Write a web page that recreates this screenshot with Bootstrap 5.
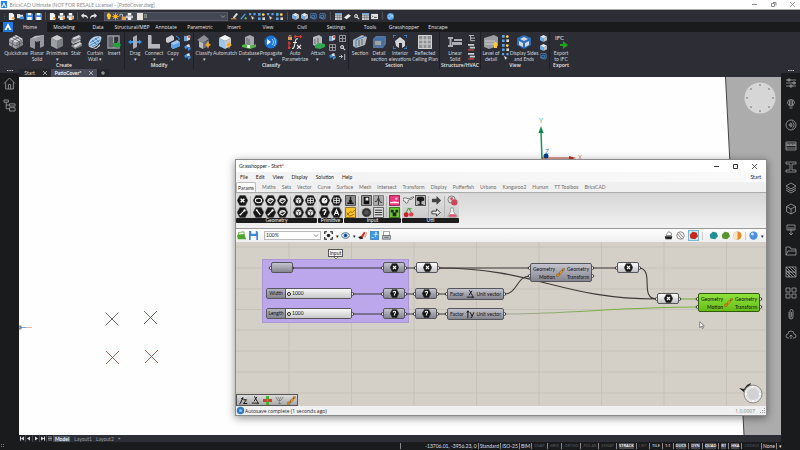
<!DOCTYPE html>
<html lang="en">
<head>
<meta charset="utf-8">
<meta name="viewport" content="width=device-width, initial-scale=1">
<title>BricsCAD Ultimate - PatioCover.dwg</title>
<link href="https://cdn.jsdelivr.net/npm/bootstrap@5.3.0/dist/css/bootstrap.min.css" rel="stylesheet">
<style>
:root{--bar:#2d2e35;--deep:#1a1b1d;--pale:#d3d5d9}
body{font-family:"Open Sans","Noto Sans",sans-serif;font-size:5px;line-height:6px;background:var(--deep);color:var(--pale)}
button,select,a.lk{font:inherit;color:inherit;background:none;border:0;padding:0;text-decoration:none;white-space:nowrap}
svg{display:block;flex:none;overflow:visible}
.i7{width:7px;height:7px}.i9{width:9px;height:9px}.i11{width:11px;height:11px}.i14{width:14px;height:14px}
.titlebar{height:10px;background:#fff;color:#8c8c8c;border-bottom:1px solid #aaa;font-family:Lato,sans-serif}
.winbtns{gap:12px;padding-right:4px}
.titlebar .winbtns{padding-right:4px}
.quick{height:12px;background:var(--bar)}
.qs{gap:2px}
.qs .vr1{margin:0 1px}
.qs.wide{margin-left:3px}
.qs.wide .vr1{margin:0 2px}
.vr1{width:1px;height:8px;background:#50525a;flex:none}
.grip{width:8px}
.layerbox{width:124px;height:9px;margin-left:7px;background:#434854;border:1px solid #555a66}
.layerbox select{appearance:none;color:#e8e8e8;line-height:6px}
.tabs{height:10px;background:var(--deep)}
.logo{width:10px;height:10px;background:#1f78e6;margin-left:3px}
.tabs a{width:34px;height:10px;color:#e6e6e6}
.tabs a.on{background:var(--bar)}
.ribbon{height:37px;background:var(--bar)}
.grp{border-right:1px solid #1f2024;padding:3px 1px 0}
.grp:last-child{border:0}
.rb{font-family:Lato,sans-serif!important;font-size:5px;line-height:6px;height:27px;color:#d0d2d6}
.rb svg{margin-bottom:1px}
.w18{width:18px}.w20{width:20px}.w22{width:22px}.w24{width:24px}.w26{width:26px}.w28{width:28px}
.smc{width:10px;gap:2px}
.gl{font-size:5px;line-height:6px;font-weight:600;color:#e4e5e8}
.dtabs{height:8px;background:var(--bar);font-family:Lato,sans-serif}
.dtabs .dt{height:8px;padding:0 4px;background:#26272c}
.dtabs .on{background:#4b4d5c;color:#fff;font-weight:600}
.side{width:19px;flex:none;background:var(--deep);color:#9a9a9a}
.side .hnd{height:4px;width:19px;background:var(--bar)}
.rail{gap:11px;padding-top:5px}
#rr svg{width:10px;height:10px;fill:none;stroke:#a0a0a0;stroke-width:.8}
.stage{background:#fefefe;min-height:0}
.mtabs{height:7px;background:var(--bar);color:#9a9ca2;font-family:Lato,sans-serif}
.mtabs .nb{width:7px;height:7px;background:#202126;border-right:1px solid #44464e}
.mtabs .on{background:#4d535f;color:#fff;font-weight:600;padding:0 1px}
.status{height:8px;background:var(--deep);font-family:Lato,sans-serif;color:#dcdee2}
.status .c{padding:0 1px;border-left:1px solid #8a8a8a;line-height:6px}
.status .t{padding:0 2px;font-family:"Open Sans",sans-serif;font-size:4px;font-weight:600}
.status .off{color:#505257}
.status .lit{background:#464a52;background-clip:content-box;color:#fff}
.status .coords{width:78px}
.status .more{width:24px;padding-left:2px}
/* floating window */
.gh{left:216px;top:82px;width:532px;height:257px;background:#f4f4f4;color:#222;border:1px solid #8b8b8b;box-shadow:0 2px 8px rgba(0,0,0,.45);font-family:Lato,sans-serif}
.gh .tt{height:12px;background:#fff;padding:0 4px 0 3px}
.gh .mn{height:10px;padding:0 5px 0 4px;background:linear-gradient(90deg,#f2f2f2,#fafafa);gap:8px}
.gh .tb{height:10px;background:#f0f0f0;color:#6c6c6c;gap:6px}
.gh .tb .on{background:#fff;color:#222;border:1px solid #bbb;border-bottom:0;border-radius:2px 2px 0 0;width:20px;height:10px}
.gh .rbn{height:37px;background:linear-gradient(#d6d6d6,#f1f1f1);border-top:1px solid #aaa;border-bottom:1px solid #999;padding:1px 0;gap:1px}
.pn{background:linear-gradient(#e2e2e2,#c6c6c6);border-radius:2px;height:29px}
.pn .ic{height:24px;padding:0 1px}
.pn .cell{display:grid;grid-template-columns:repeat(2,11px);gap:1px}
.pn .cell.one{grid-template-columns:11px}.pn .cell.three{grid-template-columns:repeat(3,11px)}
.pn .cp{height:5px;background:#1c1c1c;color:#eee;line-height:5px;border-radius:1px}
#p1{width:81px}#p2{width:25px}#p3{width:57px}#p4{width:57px}
.ln{width:1px;height:21px;background:#b4b4b4}
.gh .tools{height:13px;background:linear-gradient(#fdfdfd,#efefef);padding:0 3px 0 1px}
.g3{gap:3px}
.dd{width:2px;overflow:visible}
.zoombox{width:57px;margin-left:3px}
.zoomsel{width:57px;height:9px;border:1px solid #bbb!important;background:#fff!important;appearance:none;padding-left:1px!important;line-height:7px}
.zoombox svg{position:absolute;right:1px;top:1px}
.board{background:#d5d0c7;overflow:hidden}
.gh .st{height:9px;background:#f0f0f0;font-family:"Open Sans",sans-serif}
.ver{color:#888}
.picked{border:1px solid #7ab8d8!important;background:#cfe8f5!important}
.nd{position:absolute;height:11px;border:1px solid #55555c;border-radius:2px;background:linear-gradient(#c4c4cf,#85858f);color:#101014;line-height:6px}
.nd.lt{background:linear-gradient(#fff,#c2c2c2)}
.nd.sm{width:22px}
.nd.gn{background:linear-gradient(#8fe23c,#68bd18);border-color:#2f5a0a}
.nd.big{width:62px;height:19px;padding:0 2px}
.nd.big span{line-height:8px}
.nd.fac{width:57px;height:12px;padding:0 2px}
.zone{position:absolute;left:26px;top:17px;width:147px;height:64px;background:#bda7ec;border:1px solid #aa98d2}
.tag{position:absolute;left:92px;top:7px;width:15px;height:8px;background:#f6f6f6;border:1px solid #555;line-height:6px;color:#222;text-align:center}
.sl{width:86px;background:#eee}
.sl label{width:19px;height:9px;line-height:8px;background:linear-gradient(#b4b4c0,#85858f);border-right:1px solid #555}
.sl .trk{background:linear-gradient(#f8f8f8,#c8c8c8);height:9px}
.sl input{position:absolute;inset:0;width:100%;height:9px;appearance:none;background:none;margin:0}
.sl input::-webkit-slider-thumb{appearance:none;width:4px;height:4px;border:1px solid #222;border-radius:2px;background:#fff;margin-left:1px}
.sl output{position:relative;padding-left:6px;line-height:8px;display:block}
#a1{left:35px;top:20px}#a2{left:147px;top:20px}#a3{left:180px;top:20px}#a4{left:294px;top:21px}#a5{left:381px;top:20px}#a6{left:421px;top:51px}#a7{left:462px;top:51px}
#b1{left:30px;top:46px}#b2{left:147px;top:46px}#b3{left:179px;top:46px}#b4{left:211px;top:46px}
#c1{left:30px;top:66px}#c2{left:147px;top:66px}#c3{left:179px;top:66px}#c4{left:211px;top:66px}
.shelf{position:absolute;left:0;bottom:0;width:62px;height:12px;background:linear-gradient(#dcdcdc,#a8a8a8);border:1px solid #555}
.over{position:absolute;inset:0}
.dial{position:absolute;right:1px;bottom:1px;width:26px;height:24px}
</style>
<script src="https://cdn.jsdelivr.net/npm/bootstrap@5.3.0/dist/js/bootstrap.bundle.min.js"></script>
</head>
<body class="vh-100 d-flex flex-column overflow-hidden">

<svg width="0" height="0" class="position-absolute" aria-hidden="true">
<defs>
<symbol id="cube" viewBox="0 0 14 14"><path fill="#c9cbce" d="M7 0l6 3-6 3-6-3z"/><path fill="#9c9fa3" d="M1 3l6 3v8l-6-3z"/><path fill="#7c7f84" d="M13 3l-6 3v8l6-3z"/></symbol>
<symbol id="qdraw" viewBox="0 0 14 14"><path fill="#d7d9dc" d="M7 0l7 4-7 4-7-4z"/><path fill="#a2a5a9" d="M0 4l7 4v6l-7-4z"/><path fill="#85888c" d="M14 4l-7 4v6l7-4z"/><path stroke="#55585d" fill="none" stroke-width=".8" d="M3 2.500l7 4M5 1l7 4M10 2L3 6M0 7l7 4 7-4M3.500 6v6M10.500 6v6"/></symbol>
<symbol id="planar" viewBox="0 0 14 14"><path fill="#c2c4c8" d="M0 4l5-3 9-1v3L9 4l-4 2z"/><path fill="#95989d" d="M0 4l5-1v11l-5-2zM5 3l9-3v11l-4 2V6L6 7z"/></symbol>
<symbol id="stair" viewBox="0 0 14 14"><path fill="#cfd1d4" d="M3 3l7-3 2 2-7 3zM2 7l8-3 2 2-8 3zM3 11l8-4 2 2-7 4z"/><path fill="#84878c" d="M3 3l2 2v3l-3-1zM4 9l2 4v1l-4-3zM12 2v2l-7 4V5zM13 9v2l-7 3v-1z"/></symbol>
<symbol id="curtain" viewBox="0 0 14 14"><path fill="#a9cdf0" stroke="#dfe9f4" stroke-width=".7" d="M1 11C0 5 6 0 13 2c0 5-4 10-9 10z"/><path stroke="#3f78b4" fill="none" stroke-width=".8" d="M2 8l9-6M1 11l11-6M4 12l7-4M4 5l5 5M7 3l4 4"/><path fill="#c9cbce" d="M1 11l7 2 4-4v2l-4 3-7-2z"/></symbol>
<symbol id="insert" viewBox="0 0 14 14"><path fill="none" stroke="#9ba0a5" stroke-width="1.400" d="M1 1h11v12H1zM6.500 1v12"/><path fill="#60656c" d="M2 2h4v10H2z"/><path fill="#22a33a" d="M6 8h4V6l4 4-4 4v-2H6z"/></symbol>
<symbol id="drag" viewBox="0 0 14 14"><path fill="#a9acb0" d="M5 2l4-2v12l-4 2z"/><path fill="#3694ea" d="M0 7l3-2.500V6h2v2H3v1.500zM14 7l-3-2.500V6H9v2h2v1.500z"/></symbol>
<symbol id="conn" viewBox="0 0 14 14"><path fill="#b5b8bc" d="M1 0h3v9h9v4H1z"/><path fill="#7b7e83" d="M4 0l1 1v8H4zM1 13h12v1H1z"/></symbol>
<symbol id="copy" viewBox="0 0 14 14"><path fill="#c9ccd0" d="M0 3l6-3 2 2v3L2 8 0 7z"/><path fill="#9fc9f3" d="M5 8l6-3 3 2v4l-7 3-2-2z"/><path fill="#5aa2e8" d="M5 8l2 2 7-3v4l-7 3-2-2z"/><path fill="none" stroke="#3694ea" d="M10 1l3 2v2"/></symbol>
<symbol id="house" viewBox="0 0 14 14"><path fill="#8b8e92" d="M0 5l7-5 5 4-6 4z"/><path fill="#b9bbbf" d="M2 6l4 2v6l-4-2z"/><path fill="#6d7074" d="M6 8l6-3v6l-6 3z"/></symbol>
<symbol id="spark" viewBox="0 0 14 14"><path fill="#f9a825" d="M11 6l1 2.500L14 10l-2 1-1 3-1-3-2-1 2-1.500z"/></symbol>
<symbol id="classify" viewBox="0 0 14 14"><use href="#house"/><use href="#spark"/></symbol>
<symbol id="auto" viewBox="0 0 14 14"><path fill="#f2f4f6" d="M7 0l6 3-6 3-6-3z"/><path fill="#9cc6ea" d="M1 3l6 3v8l-6-3z"/><path fill="#c6cacf" d="M13 3L7 6v8l6-3z"/><use href="#spark"/></symbol>
<symbol id="data" viewBox="0 0 14 14"><path fill="#a4a7ab" d="M3 2l5-2 4 2v8l-5 2-4-2z"/><path stroke="#65686d" d="M5 3v6M7 4v7"/><path fill="#54b848" d="M0 10l4-1 6 2 4-2v3l-6 2-8-2z"/><path fill="#eee" d="M5 10h3v3H5z"/></symbol>
<symbol id="prop" viewBox="0 0 14 14"><circle cx="7" cy="7" r="6.500" fill="#1976d8"/><path fill="#fff" d="M3 4l4 3-4 3z"/><path fill="none" stroke="#9cd0ff" d="M8 4a4 4 0 010 6M10 3a6 6 0 010 8"/></symbol>
<symbol id="fx" viewBox="0 0 14 14"><path fill="none" stroke="#d83a3a" stroke-width="1.200" d="M1 7v7M-.5 9L1 7l1.500 2M-.5 12L1 14l1.500-2M7 1.500h6M8 .2l-1.500 1.300L8 3M12 .2l1.500 1.300L12 3"/><path fill="#e09a5a" d="M0 2h4v3H0z"/><path fill="none" stroke="#c9a080" stroke-width=".7" d="M1 2V.5h2V2"/><path fill="none" stroke="#e6e6e6" stroke-width="1.100" d="M10 4c-2-1-2.500 1-3 4s-1 6-3 5.500M5 7.500h4M9 10l4 4M13 10l-4 4"/></symbol>
<symbol id="attach" viewBox="0 0 14 14"><path fill="#b4b7bb" d="M2 2l6-2 3 2v8l-5 2-4-2z"/><path stroke="#65686d" d="M4 4v5M7 3v6"/><path fill="#32a852" d="M4 10l4-2 6 1v3l-5 2-5-1z"/></symbol>
<symbol id="sect" viewBox="0 0 14 14"><path fill="#b3b6ba" d="M0 5l9-5 5 2-2 8-9 3-3-2z"/><path fill="none" stroke="#3f83c8" d="M3 13V5l10-4"/><path stroke="#5d6065" d="M6 5v6M9 4v6"/></symbol>
<symbol id="dsect" viewBox="0 0 14 14"><path fill="#55759b" d="M1 4l3-3h10v8l-3 4H1z"/><path fill="#9fa2a7" d="M3 6h6v4H3z"/><path fill="none" stroke="#2d6db5" d="M1 4h10v9M11 4l3-3"/></symbol>
<symbol id="ielev" viewBox="0 0 14 14"><path fill="none" stroke="#3694ea" stroke-width="1.300" d="M0 3V0h3M11 0h3v3M14 11v3h-3M3 14H0v-3"/><path fill="#d0d2d5" d="M2 6l5-4 5 4v5l-3 2V8H6v5l-3-2z"/></symbol>
<symbol id="rcp" viewBox="0 0 14 14"><path fill="#8f9296" d="M0 0h14v14H0z"/><path fill="none" stroke="#d4d4d4" d="M.5.5h13v13H.5zM5 1v12M9 1v12M1 5h12M1 9h12"/></symbol>
<symbol id="beam" viewBox="0 0 14 14"><path fill="#a9acb0" d="M0 2h5v2H3.500v6H5v2H0v-2h1.500V4H0zM6 4h8v2H6zM4 7h10v3H4z"/></symbol>
<symbol id="lod" viewBox="0 0 14 14"><path fill="#9b9ea2" d="M0 3l10-3 4 2v9l-9 3-5-2z"/><path stroke="#c8cacd" d="M1 6h10M1 9h10"/><path fill="#ffc93c" d="M11 7a2 2 0 012 3v3h-3v-3a2 2 0 011-3z"/></symbol>
<symbol id="disp" viewBox="0 0 14 14"><path fill="#2c6fbd" d="M7 0l7 3v7l-7 4-7-4V3z"/><path fill="#d7d9dc" d="M7 2l4 2-4 2-4-2zM2 6l4 2v4l-4-2zM12 6L8 8v4l4-2z"/></symbol>
<symbol id="ifc" viewBox="0 0 14 14"><path fill="#1ba51b" d="M6 9h3V6l5 4-5 4v-3H6z"/></symbol>
<symbol id="s1" viewBox="0 0 8 8"><path fill="#6aa7e6" d="M0 1h3v6H0z"/><path fill="#d5d8db" d="M3 1l4-1v5L3 7z"/><circle cx="6" cy="2" r="1.500" fill="#c85a4a"/></symbol>
<symbol id="s2" viewBox="0 0 8 8"><path fill="#3f8ee0" d="M0 3l3-2 2 2-3 3zM4 5l3-2 1 2-3 3z"/><path fill="#d9dbde" d="M3 1l3-1 1 3-3 1z"/></symbol>
<symbol id="s3" viewBox="0 0 8 8"><path fill="none" stroke="#a4a6aa" d="M.5.5h7v7h-7zM.5 4h7M4 .5v7"/></symbol>
<symbol id="s4" viewBox="0 0 8 8"><path fill="#c9cbce" d="M0 0h7v2H0zM2 3h6v2H2z"/><path fill="#c94545" d="M0 6h7v1.500H0z"/></symbol>
<symbol id="s4b" viewBox="0 0 8 8"><path fill="none" stroke="#c9cbce" d="M1 .5h6M3 .5v3h5M3 3.500v3h5"/></symbol>
<symbol id="s5" viewBox="0 0 8 8"><path fill="#5ba3ea" d="M0 0h3v3H0zM0 5h3v3H0z"/><path fill="#d9d9d9" d="M5 5h3v3H5z"/><circle cx="6" cy="1.800" r="1.600" fill="#ffcf4b"/></symbol>
<symbol id="s8" viewBox="0 0 8 8"><path fill="#5ba3ea" d="M0 0h2.500v2.500H0zM5 0h2.500v2.500H5z"/><path fill="#e0e0e0" d="M2.500 3l4 3-2 .3L3.500 8z"/></symbol>
<symbol id="s6" viewBox="0 0 8 8"><path fill="#e4e6e9" d="M4 0l4 2-4 2-4-2z"/><path fill="#6ab1f2" d="M0 2l4 2v4L0 6z"/><path fill="#bcc0c5" d="M8 2L4 4v4l4-2z"/></symbol>
<symbol id="s7" viewBox="0 0 8 8"><path fill="none" stroke="#4a88c8" d="M2 0l5 1v5l-2 1-5-2V2zM2 2.500h3v3H2z"/></symbol>
<symbol id="page" viewBox="0 0 8 8"><path fill="#f0f0f0" d="M1 0h4l2 2v6H1z"/><circle cx="6" cy="6" r="1.500" fill="#f5a742"/></symbol>
<symbol id="fold" viewBox="0 0 8 8"><path fill="#dedede" d="M0 1h3l1 1h3v4H0z"/><path fill="#3e8fe4" d="M4 4h4v3H3z"/></symbol>
<symbol id="save" viewBox="0 0 8 8"><path fill="#3a86de" d="M0 0h7l1 1v7H0z"/><path fill="#fff" d="M2 0h4v2.500H2zM1.500 4.500h5V8h-5z"/></symbol>
<symbol id="prt" viewBox="0 0 8 8"><path fill="#fff" d="M2 0h4v3H2z"/><path fill="#c3c6ca" d="M0 3h8v3H0z"/><path fill="#f3f3f3" d="M2 5h4v3H2z"/></symbol>
<symbol id="prt2" viewBox="0 0 8 8"><use href="#prt"/><circle cx="6.500" cy="6" r="1.500" fill="#f19a38"/></symbol>
<symbol id="undo" viewBox="0 0 8 8"><path fill="#e6e6e6" d="M0 3l3-3v2c3 0 5 1 5 5-1-2-2-3-5-3v2z"/></symbol>
<symbol id="bulb" viewBox="0 0 8 8"><path fill="#ffc933" d="M4 0a3 3 0 012 5v2H3V5a3 3 0 011-5z"/></symbol>
<symbol id="sun" viewBox="0 0 8 8"><circle cx="4" cy="4" r="2.400" fill="#ffb81c"/><path stroke="#ffb81c" d="M4 0v8M0 4h8M1 1l6 6M7 1L1 7" stroke-width=".8"/></symbol>
<symbol id="lock" viewBox="0 0 8 8"><path fill="#e8a053" d="M3 4h5v4H3z"/><path fill="none" stroke="#ccc" d="M1 4V1.500h3V4"/></symbol>
<symbol id="pen" viewBox="0 0 8 8"><path fill="#e0e0e0" d="M6 0l2 1-4 5-2-1z"/><path fill="#f19a38" d="M0 6h5l2 1H0z"/></symbol>
<symbol id="pen2" viewBox="0 0 8 8"><path stroke="#4ba1f0" stroke-width="1.500" d="M1 7l5-6"/><path stroke="#67c04a" stroke-width="1.200" d="M5 6h3M6.500 4.500v3"/></symbol>
<symbol id="cal" viewBox="0 0 8 8"><path fill="#c8cacd" d="M0 0h8v8H0z"/><path stroke="#555" stroke-width=".6" d="M0 2.500h8M0 5h8M3 2v6M5.500 2v6"/><path fill="#5ea5ea" d="M0 0h8v1.500H0z"/></symbol>
<symbol id="key" viewBox="0 0 8 8"><path fill="none" stroke="#d9d9d9" stroke-width="1.300" d="M2 4a1.500 1.500 0 103-1 1.500 1.500 0 10-3 1zM5 5l2 2"/></symbol>
<symbol id="glob" viewBox="0 0 8 8"><circle cx="4" cy="4" r="4" fill="#4aa0ec"/><path fill="none" stroke="#fff" stroke-width=".7" d="M2 3c1-2 3-1 3 0S3.500 4 3.500 5.500M1 5l2 1.500M6 2v3"/></symbol>
<symbol id="dots" viewBox="0 0 6 2"><path fill="#c4c6cb" d="M0 0h1.500v1H0zM2.300 0h1.500v1H2.300zM4.600 0h1.500v1H4.600z"/></symbol>
<symbol id="hex" viewBox="0 0 12 12"><path fill="#171717" stroke="#444" stroke-width=".5" d="M3 .5h6L11.800 6 9 11.500H3L.2 6z"/></symbol>
<symbol id="hx" viewBox="0 0 12 12"><use href="#hex"/><path stroke="#fff" stroke-width="1.600" d="M4 4l4 4M8 4L4 8"/></symbol>
<symbol id="hp" viewBox="0 0 12 12"><use href="#hex"/><path stroke="#fff" stroke-width="1.200" d="M3.500 8.500l5-5"/><circle cx="8.300" cy="3.700" r="1.200" fill="#fff"/><circle cx="3.700" cy="8.300" r="1" fill="#fff"/></symbol>
<symbol id="ho" viewBox="0 0 12 12"><use href="#hex"/><ellipse cx="6" cy="6" rx="3.500" ry="2.400" fill="none" stroke="#fff" stroke-width="1.100"/></symbol>
<symbol id="hs" viewBox="0 0 12 12"><use href="#hex"/><path fill="none" stroke="#eee" stroke-width="1.100" d="M3 7c0-4 6-4 6-1L6 9zM4 6l4-1"/></symbol>
<symbol id="hn" viewBox="0 0 12 12"><use href="#hex"/><path stroke="#fff" stroke-width="1.200" d="M4 3.500l4 5"/><circle cx="4" cy="3.500" r="1" fill="#fff"/></symbol>
<symbol id="hc" viewBox="0 0 12 12"><use href="#hex"/><path fill="#ddd" d="M3 4l3-1.500L9 4v4L6 9.500 3 8z"/><path fill="none" stroke="#333" stroke-width=".7" d="M3 4l3 1.500L9 4M6 5.500v4"/></symbol>
<symbol id="hd" viewBox="0 0 12 12"><use href="#hex"/><path fill="none" stroke="#eee" stroke-width=".9" d="M3 3.500h6v5H3zM6 2.500v7M2.500 6h7"/></symbol>
<symbol id="hq" viewBox="0 0 12 12"><use href="#hex"/><path fill="none" stroke="#fff" stroke-width="1.400" d="M4.300 4.600c0-2.300 3.600-2 3.200 0-.3 1.200-1.800 1.600-1.800 4.200"/></symbol>
<symbol id="ha" viewBox="0 0 12 12"><use href="#hex"/><path fill="none" stroke="#fff" stroke-width="1.200" d="M3.500 9L6 3l2.500 6M4.500 7h3"/></symbol>
<symbol id="h7" viewBox="0 0 12 12"><use href="#hex"/><circle cx="6" cy="6" r="3.200" fill="#eee"/><path stroke="#222" stroke-width="1" d="M6 6l2-2"/></symbol>
<symbol id="gdn" viewBox="0 0 12 12"><path fill="#8c8c8c" stroke="#444" d="M.5.5h11v11H.5z"/><path fill="none" stroke="#111" stroke-width="1.500" d="M6 2v6M2.500 9h7M4.500 6L6 8l1.500-2"/></symbol>
<symbol id="gyl" viewBox="0 0 12 12"><path fill="#ffc224" stroke="#8a6a1a" d="M.5.500h11v11H.5z"/><path fill="none" stroke="#6b4a10" stroke-width=".8" d="M2 9l4-4 2 1 3-3M2 6l3 4 5-2"/></symbol>
<symbol id="gbl" viewBox="0 0 12 12"><path fill="#9c9c9c" stroke="#444" d="M.5.500h11v11H.5z"/><path fill="#111" d="M3 2h6v8H3z"/><path fill="#eee" d="M5 3h3v3H5z"/></symbol>
<symbol id="gkn" viewBox="0 0 12 12"><circle cx="6" cy="6" r="5" fill="#333" stroke="#999" stroke-dasharray="1 1"/><circle cx="6" cy="6" r="2.500" fill="#555"/></symbol>
<symbol id="gwv" viewBox="0 0 12 12"><path fill="#aaa" stroke="#777" d="M.5.500h11v11H.5z"/><path fill="none" stroke="#333" d="M2 7h2l2-4 2 5h2M6 1v10"/></symbol>
<symbol id="gls" viewBox="0 0 12 12"><path fill="#ddd" stroke="#555" d="M.5.500h11v11H.5z"/><path stroke="#222" d="M2 3.500h8M2 6h8M2 8.500h8"/></symbol>
<symbol id="gpk" viewBox="0 0 12 12"><path fill="#f2367d" stroke="#902050" d="M.5.500h11v11H.5z"/><path fill="#fff" d="M1 8l5-1 5 1v1H1z"/><circle cx="8" cy="4" r="1.300" fill="#ffd0e0"/></symbol>
<symbol id="ggr" viewBox="0 0 12 12"><path fill="#6ac72d" stroke="#2f6b10" d="M.5.500h11v11H.5z"/><path fill="#222" d="M2 3h3v3H2zM7 3h3v3H7zM4 6h4v4H4z"/></symbol>
<symbol id="ubr" viewBox="0 0 12 12"><path fill="#eee" stroke="#333" stroke-width=".7" d="M0 4c2-2 4 0 6 0s3-2 6-2c-1 2-3 3-5 3s-1 4-3 4-1-3-4-3z"/></symbol>
<symbol id="utr" viewBox="0 0 12 12"><path fill="#b8b8b8" stroke="#444" d="M.5.500h11v11H.5z"/><path fill="#1a1a1a" d="M5 7L2 6V3l2-1h4l2 1v3L7 7v3h2v1H3v-1h2z"/></symbol>
<symbol id="uch" viewBox="0 0 12 12"><circle cx="3.500" cy="8.500" r="2.700" fill="#c9202c"/><circle cx="9" cy="8" r="2.400" fill="#e0404a"/><path fill="none" stroke="#3b8a2a" d="M3.500 6L6 1l3 5"/><path fill="#57b03a" d="M6 1h4L8 3z"/></symbol>
<symbol id="uar" viewBox="0 0 12 12"><path fill="#444" d="M1 4h5V1l5 5-5 5V8H1z"/></symbol>
<symbol id="uao" viewBox="0 0 12 12"><path fill="#eee" stroke="#333" d="M1 4.500h5V2l4 4-4 4V7.500H1z"/></symbol>
<symbol id="ufl" viewBox="0 0 12 12"><path fill="#f4f4f4" stroke="#777" stroke-width=".7" d="M4 1h3v4l4 5-1 1H2l-1-1 3-5z"/><path fill="#e05070" d="M3 8h6l1.500 2.500h-9z"/></symbol>
<symbol id="uxx" viewBox="0 0 12 12"><circle cx="5" cy="5" r="4" fill="#ddd" stroke="#777"/><circle cx="8" cy="8" r="3.500" fill="#c84a5a"/><circle cx="5" cy="4" r="1.500" fill="#d05060"/></symbol>
<symbol id="topen" viewBox="0 0 12 12"><path fill="#e6f5d8" stroke="#6a9a4a" d="M2 2l7-1 2 9H2z"/><path fill="#4fa52a" d="M0 5l9-1 3 7H1z"/></symbol>
<symbol id="ext" viewBox="0 0 12 12"><path fill="none" stroke="#222" stroke-width="1.600" d="M1 4V1h3M8 1h3v3M11 8v3H8M4 11H1V8"/><circle cx="6" cy="6" r="2.300" fill="#222"/></symbol>
<symbol id="eye" viewBox="0 0 12 12"><path fill="#f7fbff" stroke="#1d3f6e" d="M0 6c3-5 9-5 12 0-3 5-9 5-12 0z"/><circle cx="6" cy="6" r="2.700" fill="#2f78c4"/><circle cx="6" cy="6" r="1.200" fill="#0b1c33"/></symbol>
<symbol id="brush" viewBox="0 0 12 12"><path fill="#d8382a" d="M3 8l5-7 2 1-4 8z"/><path fill="#222" d="M0 8l3 3 4-1-3-3z"/><path fill="#e9b088" d="M8 8l3-7 1 2-2 6z"/></symbol>
<symbol id="puz" viewBox="0 0 12 12"><path fill="#3f98e8" stroke="#2a6db5" d="M.5.500h11v11H.5z"/><path fill="#cfe6fa" d="M7 1h2v3h2v1H8v3H7V5H5V4h2zM2 8h3v1H2z"/></symbol>
<symbol id="scn" viewBox="0 0 12 12"><path fill="#fafafa" stroke="#888" d="M2 .5h8V6H2z"/><path fill="#b6bcc4" stroke="#666" d="M.5 6h11v5H.5z"/><path stroke="#555" d="M3 8.500h6"/></symbol>
<symbol id="blob" viewBox="0 0 12 12"><path d="M1 5l4-4 5 1 2 5-4 4-6-1z"/></symbol>
<symbol id="gear" viewBox="0 0 12 12"><path stroke="#222" stroke-width=".8" d="M1 11L11 1"/><path fill="#f09a1c" stroke="#7a4300" stroke-width=".6" d="M4 6l4-3 1 2-4 4zM1 8h3v3H1zM8 1h3v2H9z"/></symbol>
<symbol id="vx" viewBox="0 0 12 12"><path fill="none" stroke="#111" stroke-width="1.200" d="M4 1h1l3 6h1M8 1L4 7M1 9.500h9M8.500 8L10 9.500 8.500 11"/></symbol>
<symbol id="vy" viewBox="0 0 12 12"><path fill="none" stroke="#111" stroke-width="1.300" d="M2.500 11V2M1 3.500L2.500 1 4 3.500M5.500 3L8 8M10.500 3L7.500 10l-1.500.5"/></symbol>
<symbol id="vz" viewBox="0 0 12 12"><path fill="none" stroke="#111" stroke-width="1.300" d="M1 11l4-8M3 4l2-2v3M6 5h4l-4 5h5"/></symbol>
<symbol id="plusc" viewBox="0 0 12 12"><path fill="#4caf2f" d="M4 0h4v12H4z"/><path fill="#c8442c" d="M0 4h5v4H0zM7 4h5v4H7z"/></symbol>
<symbol id="fork" viewBox="0 0 12 12"><path fill="none" stroke="#777" d="M1 1l3 5h4l3-5M4 1l2 4 2-4M6 6v5M4 10h4"/></symbol>
<symbol id="curs" viewBox="0 0 8 12"><path fill="#fff" stroke="#444" stroke-width=".8" d="M1 1v8l2-2 1.500 3 1.300-.6L4.500 6.500H7z"/></symbol>
</defs></svg>

<header class="titlebar d-flex align-items-center flex-shrink-0">
<svg class="i7" viewBox="0 0 8 8"><path fill="#2082ec" d="M1 0h7v8H1z"/><path fill="#fff" d="M4.500 1l3 6H6L4.500 4 3 7H1.500z"/></svg>
<span>&nbsp;&nbsp;BricsCAD Ultimate (NOT FOR RESALE License) - [PatioCover.dwg]</span>
<div class="winbtns d-flex ms-auto">
<button aria-label="Minimise"><svg class="i7" viewBox="0 0 7 7"><path stroke="#888" d="M1 3.500h5"/></svg></button>
<button aria-label="Restore"><svg class="i7" viewBox="0 0 7 7"><path fill="none" stroke="#888" d="M1.500 2.500h3v3h-3zM3 1.500h3v3"/></svg></button>
<button aria-label="Close"><svg class="i7" viewBox="0 0 7 7"><path stroke="#888" stroke-width=".8" d="M1 1l5 5M6 1L1 6"/></svg></button>
</div>
</header>

<div class="quick d-flex align-items-center flex-shrink-0" role="toolbar">
<span class="grip text-secondary text-center">⋮</span>
<div class="d-flex align-items-center qs"><button aria-label="New"><svg class="i7"><use href="#page"/></svg></button><button aria-label="Open"><svg class="i7"><use href="#fold"/></svg></button><button aria-label="Save"><svg class="i7"><use href="#save"/></svg></button><button aria-label="Save as"><svg class="i7"><use href="#save"/></svg></button><span class="vr1"></span><button aria-label="Preview"><svg class="i7"><use href="#page"/></svg></button><button aria-label="Print"><svg class="i7"><use href="#prt2"/></svg></button><button aria-label="Publish"><svg class="i7"><use href="#prt2"/></svg></button><span class="vr1"></span><button aria-label="Undo"><svg class="i7"><use href="#undo"/></svg></button><button aria-label="Redo"><svg class="i7" viewBox="0 0 8 8"><path fill="#e6e6e6" d="M8 3L5 0v2C2 2 0 3 0 7c1-2 2-3 5-3v2z"/></svg></button></div>
<div class="layerbox d-flex align-items-center">
<svg class="i7"><use href="#bulb"/></svg><svg class="i7"><use href="#sun"/></svg><svg class="i7"><use href="#lock"/></svg><svg class="i7"><use href="#prt"/></svg><svg class="i7 ms-1" viewBox="0 0 7 7"><path fill="#e8e4dc" d="M0 0h6v7H0z"/></svg>
<select class="flex-grow-1" aria-label="Layer"><option>0</option></select>
<svg class="i7" viewBox="0 0 7 7"><path fill="none" stroke="#aaa" stroke-width=".8" d="M1 2.500l2 2 2-2"/></svg>
</div>
<div class="d-flex align-items-center qs wide"><button aria-label="Match"><svg class="i7"><use href="#pen"/></svg></button><button aria-label="Edit"><svg class="i7"><use href="#pen2"/></svg></button><button aria-label="Filter"><svg class="i7"><use href="#s8"/></svg></button><button aria-label="Isolate"><svg class="i7"><use href="#s5"/></svg></button><button aria-label="Hide"><svg class="i7"><use href="#s8"/></svg></button><button aria-label="Show"><svg class="i7"><use href="#s5"/></svg></button><span class="vr1"></span><button aria-label="Box"><svg class="i7"><use href="#s6"/></svg></button><button aria-label="Shade"><svg class="i7"><use href="#s6"/></svg></button><button aria-label="Wire"><svg class="i7"><use href="#s7"/></svg></button><button aria-label="Solid"><svg class="i7"><use href="#s7"/></svg></button><span class="vr1"></span><button aria-label="Table"><svg class="i7"><use href="#cal"/></svg></button><button aria-label="Erase"><svg class="i7" viewBox="0 0 8 8"><path fill="#e8eaee" d="M0 5l5-4 3 2-5 4z"/></svg></button><button aria-label="Settings"><svg class="i7"><use href="#key"/></svg></button><button aria-label="Sheet"><svg class="i7"><use href="#cal"/></svg></button><button aria-label="Console"><svg class="i7" viewBox="0 0 8 8"><path fill="#e0e0e0" d="M0 1h8v6H0z"/><path stroke="#333" d="M1 3l1 1-1 1M3.500 5h3" fill="none"/></svg></button><span class="vr1"></span><button aria-label="Help"><svg class="i7"><use href="#glob"/></svg></button></div>
</div>

<nav class="tabs d-flex align-items-center flex-shrink-0">
<button class="logo" aria-label="Application menu"><svg width="10" height="10" viewBox="0 0 10 10"><path fill="#fff" d="M5 1l3.500 7H6.500L5 5 3.500 8h-2z"/></svg></button>
<a class="lk on d-flex justify-content-center align-items-center" href="#">Home</a><a class="lk d-flex justify-content-center align-items-center" href="#">Modeling</a><a class="lk d-flex justify-content-center align-items-center" href="#">Data</a><a class="lk d-flex justify-content-center align-items-center" href="#">Structural/MEP</a><a class="lk d-flex justify-content-center align-items-center" href="#">Annotate</a><a class="lk d-flex justify-content-center align-items-center" href="#">Parametric</a><a class="lk d-flex justify-content-center align-items-center" href="#">Insert</a><a class="lk d-flex justify-content-center align-items-center" href="#">View</a><a class="lk d-flex justify-content-center align-items-center" href="#">Civil</a><a class="lk d-flex justify-content-center align-items-center" href="#">Settings</a><a class="lk d-flex justify-content-center align-items-center" href="#">Tools</a><a class="lk d-flex justify-content-center align-items-center" href="#">Grasshopper</a><a class="lk d-flex justify-content-center align-items-center" href="#">Enscape</a>
</nav>

<section class="ribbon d-flex flex-shrink-0 ps-1">
<div class="grp"><div class="d-flex">
<button class="rb w22 d-flex flex-column align-items-center"><svg class="i14"><use href="#qdraw"/></svg>Quickdraw</button>
<button class="rb w20 d-flex flex-column align-items-center"><svg class="i14"><use href="#planar"/></svg>Planar<br>Solid</button>
<button class="rb w20 d-flex flex-column align-items-center"><svg class="i14"><use href="#cube"/></svg>Primitives<br>▾</button>
<button class="rb w18 d-flex flex-column align-items-center"><svg class="i14"><use href="#stair"/></svg>Stair</button>
<button class="rb w20 d-flex flex-column align-items-center"><svg class="i14"><use href="#curtain"/></svg>Curtain<br>Wall ▾</button>
<button class="rb w18 d-flex flex-column align-items-center"><svg class="i14"><use href="#insert"/></svg>Insert</button></div>
<div class="gl text-center">Create</div></div>
<div class="grp"><div class="d-flex">
<button class="rb w18 d-flex flex-column align-items-center"><svg class="i14"><use href="#drag"/></svg>Drag<br>▾</button>
<button class="rb w20 d-flex flex-column align-items-center"><svg class="i14"><use href="#conn"/></svg>Connect<br>▾</button>
<button class="rb w18 d-flex flex-column align-items-center"><svg class="i14"><use href="#copy"/></svg>Copy<br>▾</button>
<div class="smc d-flex flex-column align-items-center"><button aria-label="Mirror"><svg class="i7"><use href="#s1"/></svg></button><button aria-label="Rotate"><svg class="i7"><use href="#s2"/></svg></button><button aria-label="Array"><svg class="i7"><use href="#s2"/></svg></button></div></div>
<div class="gl text-center">Modify</div></div>
<div class="grp"><div class="d-flex">
<button class="rb w18 d-flex flex-column align-items-center"><svg class="i14"><use href="#classify"/></svg>Classify<br>▾</button>
<button class="rb w24 d-flex flex-column align-items-center"><svg class="i14"><use href="#auto"/></svg>Automatch</button>
<button class="rb w24 d-flex flex-column align-items-center"><svg class="i14"><use href="#data"/></svg>Database<br>▾</button>
<button class="rb w20 d-flex flex-column align-items-center"><svg class="i14"><use href="#prop"/></svg>Propagate<br>▾</button>
<button class="rb w28 d-flex flex-column align-items-center"><svg class="i14"><use href="#fx"/></svg>Auto<br>Parametrize</button>
<button class="rb w18 d-flex flex-column align-items-center"><svg class="i14"><use href="#attach"/></svg>Attach<br>▾</button>
<div class="smc d-flex flex-column align-items-center"><button aria-label="Info"><svg class="i7"><use href="#s1"/></svg></button><button aria-label="Box"><svg class="i7"><use href="#s3"/></svg></button><button aria-label="Tag"><svg class="i7"><use href="#s2"/></svg></button></div>
<div class="smc d-flex flex-column align-items-center"><button aria-label="Grid"><svg class="i7"><use href="#s3"/></svg></button><button aria-label="Axis"><svg class="i7"><use href="#key"/></svg></button><button aria-label="Align"><svg class="i7" viewBox="0 0 8 8"><path fill="none" stroke="#ccc" d="M0 4h4M2 2l2 2-2 2M6.500 1v7"/></svg></button></div></div>
<div class="gl text-center">Classify</div></div>
<div class="grp"><div class="d-flex">
<button class="rb w20 d-flex flex-column align-items-center"><svg class="i14"><use href="#sect"/></svg>Section<br>&nbsp;</button>
<button class="rb w18 d-flex flex-column align-items-center"><svg class="i14"><use href="#dsect"/></svg>Detail<br>section</button>
<button class="rb w24 d-flex flex-column align-items-center"><svg class="i14"><use href="#ielev"/></svg>Interior<br>elevations</button>
<button class="rb w26 d-flex flex-column align-items-center"><svg class="i14"><use href="#rcp"/></svg>Reflected<br>Ceiling Plan</button></div>
<div class="gl text-center">Section</div></div>
<div class="grp"><div class="d-flex justify-content-center">
<button class="rb w22 d-flex flex-column align-items-center"><svg class="i14"><use href="#beam"/></svg>Linear<br>Solid</button>
<div class="smc d-flex flex-column align-items-center"><button aria-label="Profile"><svg class="i7"><use href="#s4b"/></svg></button><button aria-label="Beam"><svg class="i7"><use href="#s4"/></svg></button><button aria-label="Duct"><svg class="i7"><use href="#s4"/></svg></button></div></div>
<div class="gl text-center">Structure/HVAC</div></div>
<div class="grp"><div class="d-flex">
<button class="rb w18 d-flex flex-column align-items-center"><svg class="i14"><use href="#lod"/></svg>Level of<br>detail</button>
<div class="smc d-flex flex-column align-items-center"><button aria-label="Show"><svg class="i7"><use href="#s5"/></svg></button><button aria-label="Hide"><svg class="i7"><use href="#s5"/></svg></button><button aria-label="Pick"><svg class="i7"><use href="#s8"/></svg></button></div>
<button class="rb w28 d-flex flex-column align-items-center"><svg class="i14"><use href="#disp"/></svg>Display Sides<br>and Ends</button>
<div class="smc d-flex flex-column align-items-center"><button aria-label="Top"><svg class="i7"><use href="#s6"/></svg></button><button aria-label="Front"><svg class="i7"><use href="#s6"/></svg></button><button aria-label="Frame"><svg class="i7"><use href="#s7"/></svg></button></div></div>
<div class="gl text-center">View</div></div>
<div class="grp"><div class="d-flex">
<button class="rb w20 d-flex flex-column align-items-center"><svg class="i14" viewBox="0 0 14 14"><text x="1" y="5" font-size="6" fill="#e8e8e8">IFC</text><use href="#ifc"/></svg>Export<br>to IFC</button></div>
<div class="gl text-center">Export</div></div>
</section>

<main class="d-flex flex-grow-1 overflow-hidden">
<aside class="side d-flex flex-column align-items-center"><div class="hnd d-flex justify-content-center align-items-center"><svg width="6" height="2"><use href="#dots"/></svg></div>
<div class="rail d-flex flex-column"><button aria-label="Home"><svg class="i11" viewBox="0 0 10 10" fill="none" stroke="#9a9a9a" stroke-width=".8"><path d="M0 5l5-5 5 5M1.500 4v6h7V4M4 10V6h2v4"/></svg></button><button aria-label="Structure"><svg class="i11" viewBox="0 0 10 10" fill="none" stroke="#9a9a9a" stroke-width=".8"><path d="M0 0h4v2H0zM2 2v6h3M2 4.500h3M5 3.500h5v2H5zM5 7h5v3H5z"/></svg></button></div></aside>

<div class="d-flex flex-column flex-grow-1 overflow-hidden">
<div class="dtabs d-flex align-items-center"><a class="lk dt d-flex align-items-center" href="#">&nbsp;Start</a><button class="dt" aria-label="Close Start"><svg width="4" height="4" viewBox="0 0 4 4"><path stroke="#bbb" stroke-width=".8" d="M0 0l4 4M4 0L0 4"/></svg></button><a class="lk dt on d-flex align-items-center" href="#">PatioCover*</a><button class="dt on" aria-label="Close PatioCover"><svg width="4" height="4" viewBox="0 0 4 4"><path stroke="#ccc" stroke-width=".8" d="M0 0l4 4M4 0L0 4"/></svg></button><button class="dt" aria-label="New tab"><svg width="4" height="4" viewBox="0 0 4 4"><path stroke="#ccc" stroke-width=".8" d="M0 2h4M2 0v4"/></svg></button></div>
<div class="stage flex-grow-1 position-relative overflow-hidden">
<svg class="over w-100 h-100" viewBox="0 0 762 358" preserveAspectRatio="xMaxYMin slice">
<path fill="#acacac" d="M706.500 0H762v358H725z"/><path stroke="#444" d="M706.500 0L725 358"/>
<circle cx="741" cy="21" r="15.500" fill="#d6d6d6"/>
<g fill="#666"><circle cx="741" cy="8" r=".8"/><circle cx="741" cy="34" r=".8"/><circle cx="728" cy="21" r=".8"/><circle cx="754" cy="21" r=".8"/><circle cx="732" cy="12" r=".8"/><circle cx="750" cy="12" r=".8"/><circle cx="732" cy="30" r=".8"/><circle cx="750" cy="30" r=".8"/></g>
<g stroke="#555f55" stroke-width=".9"><path d="M86.500 235.500l13 13M99.500 235.500l-13 13M125 234l13 13M138 234l-13 13"/><path stroke="#8e5548" d="M87 274l13 13M100 274l-13 13M126 273l13 13M139 273l-13 13"/></g>
<path stroke="#6bb1e8" d="M1 250.500h6"/><path stroke="#efb2a6" d="M7 250.500h6"/><path fill="none" stroke="#444" stroke-width=".7" d="M0 249h2v3H0z"/>
<path stroke="#129a55" stroke-width="1.500" d="M523 82l-1-27"/><path fill="#0d8a4a" d="M519.500 56l2.500-7 2.500 7z"/><path stroke="#b8392c" d="M523 81h30"/><path fill="#b8392c" d="M550 79l7 2-7 2z"/><circle cx="527" cy="79" r="2.500" fill="#123c86"/>
<g font-size="7"><text x="520" y="46" fill="#35b37a">Y</text><text x="526" y="77" fill="#3c7fd0">Z</text><text x="559" y="83" fill="#e8827a">X</text></g>
</svg>

<div class="gh position-absolute d-flex flex-column">
<div class="tt d-flex align-items-center"><span>Grasshopper - Start*</span><div class="winbtns d-flex ms-auto"><button aria-label="Minimise"><svg class="i7" viewBox="0 0 7 7"><path stroke="#333" d="M1 3.500h5"/></svg></button><button aria-label="Maximise"><svg class="i7" viewBox="0 0 7 7"><path fill="none" stroke="#333" d="M1.500 1.500h4v4h-4z"/></svg></button><button aria-label="Close"><svg class="i7" viewBox="0 0 7 7"><path stroke="#333" stroke-width=".8" d="M1 1l5 5M6 1L1 6"/></svg></button></div></div>
<div class="mn d-flex align-items-center"><button>File</button><button>Edit</button><button>View</button><button>Display</button><button>Solution</button><button>Help</button><span class="ms-auto">Start</span></div>
<div class="tb d-flex align-items-center"><a class="lk on d-flex align-items-center justify-content-center" href="#">Params</a><a class="lk" href="#">Maths</a><a class="lk" href="#">Sets</a><a class="lk" href="#">Vector</a><a class="lk" href="#">Curve</a><a class="lk" href="#">Surface</a><a class="lk" href="#">Mesh</a><a class="lk" href="#">Intersect</a><a class="lk" href="#">Transform</a><a class="lk" href="#">Display</a><a class="lk" href="#">Pufferfish</a><a class="lk" href="#">Urbano</a><a class="lk" href="#">Kangaroo2</a><a class="lk" href="#">Human</a><a class="lk" href="#">TT Toolbox</a><a class="lk" href="#">BricsCAD</a></div>
<div class="rbn d-flex">
<div class="pn" id="p1"><div class="ic d-flex justify-content-between align-items-center"><div class="cell one"><svg class="i11"><use href="#hx"/></svg><svg class="i11"><use href="#hp"/></svg></div><span class="ln"></span><div class="cell three"><svg class="i11"><use href="#ho"/></svg><svg class="i11"><use href="#hs"/></svg><svg class="i11"><use href="#hs"/></svg><svg class="i11"><use href="#hn"/></svg><svg class="i11"><use href="#hp"/></svg><svg class="i11"><use href="#hs"/></svg></div><span class="ln"></span><div class="cell"><svg class="i11"><use href="#hc"/></svg><svg class="i11"><use href="#hd"/></svg><svg class="i11"><use href="#hc"/></svg><svg class="i11"><use href="#hc"/></svg></div></div><div class="cp text-center">Geometry</div></div>
<div class="pn" id="p2"><div class="ic d-flex align-items-center"><div class="cell"><svg class="i11"><use href="#h7"/></svg><svg class="i11"><use href="#hd"/></svg><svg class="i11"><use href="#hq"/></svg><svg class="i11"><use href="#ha"/></svg></div></div><div class="cp text-center">Primitive</div></div>
<div class="pn" id="p3"><div class="ic d-flex justify-content-between align-items-center"><div class="cell one"><svg class="i11"><use href="#gdn"/></svg><svg class="i11"><use href="#gyl"/></svg></div><span class="ln"></span><div class="cell"><svg class="i11"><use href="#gbl"/></svg><svg class="i11"><use href="#gwv"/></svg><svg class="i11"><use href="#gkn"/></svg><svg class="i11"><use href="#gls"/></svg></div><span class="ln"></span><div class="cell one"><svg class="i11"><use href="#gpk"/></svg><svg class="i11"><use href="#ggr"/></svg></div></div><div class="cp text-center">Input</div></div>
<div class="pn" id="p4"><div class="ic d-flex justify-content-between align-items-center"><div class="cell"><svg class="i11"><use href="#ubr"/></svg><svg class="i11"><use href="#utr"/></svg><svg class="i11"><use href="#uch"/></svg></div><span class="ln"></span><div class="cell one"><svg class="i11"><use href="#uar"/></svg><svg class="i11"><use href="#uao"/></svg></div><span class="ln"></span><div class="cell one"><svg class="i11"><use href="#uxx"/></svg><svg class="i11"><use href="#ufl"/></svg></div></div><div class="cp text-center">Util</div></div>
</div>
<div class="tools d-flex align-items-center g3"><button aria-label="Open"><svg class="i9"><use href="#topen"/></svg></button><button aria-label="Save"><svg class="i9"><use href="#save"/></svg></button><div class="zoombox position-relative"><select class="zoomsel d-block" aria-label="Zoom"><option>100%</option></select><svg class="i7" viewBox="0 0 7 7"><path fill="none" stroke="#777" stroke-width=".8" d="M1 2.500l2 2 2-2"/></svg></div><button aria-label="Zoom extents"><svg class="i9"><use href="#ext"/></svg></button><span class="dd">▾</span><button aria-label="Views"><svg class="i9"><use href="#eye"/></svg></button><span class="dd">▾</span><button aria-label="Sketch"><svg class="i9"><use href="#brush"/></svg></button><button aria-label="Plugins"><svg class="i9"><use href="#puz"/></svg></button><button aria-label="Recent"><svg class="i9"><use href="#scn"/></svg></button>
<div class="d-flex align-items-center ms-auto g3"><button aria-label="No preview"><svg class="i9" viewBox="0 0 12 12"><path fill="#fff" stroke="#666" d="M3 5l3-4 4 2v3H3z"/><path fill="#222" d="M1 7h10l-1 4H2z"/></svg></button><button aria-label="Wire preview"><svg class="i9" viewBox="0 0 12 12"><circle cx="6" cy="6" r="5" fill="#eee" stroke="#777"/><path stroke="#777" d="M2 4l6 7M4 2l6 7"/></svg></button><button class="picked" aria-label="Shaded preview"><svg class="i9" fill="#c8281c"><use href="#blob"/></svg></button><span class="vr1 opacity-25"></span><span></span><button aria-label="Selected"><svg class="i9" fill="#1f8f96"><use href="#blob"/></svg></button><button aria-label="Document"><svg class="i9" fill="#58932d"><use href="#blob"/></svg></button><button aria-label="Mesh quality"><svg class="i9" viewBox="0 0 12 12"><circle cx="6" cy="6" r="5.500" fill="#e9892a"/><path fill="#f6e7c8" d="M6 .5a5.500 5.500 0 000 11z"/></svg></button><span class="vr1 opacity-25"></span><button aria-label="Material"><svg class="i9" viewBox="0 0 12 12"><circle cx="6" cy="6" r="5.500" fill="#4a8fe0"/><circle cx="4.500" cy="4" r="2" fill="#c9e0fa"/></svg></button><span class="dd">▾</span></div></div>

<div class="board flex-grow-1 position-relative">
<svg class="over" width="530" height="164" viewBox="236 242 530 164"><path stroke="#c3beb6" stroke-width=".8" d="M289 242v164M351.500 242v164M414 242v164M476.500 242v164M539 242v164M601.500 242v164M664 242v164M726.500 242v164M236 247h530M236 268h530M236 289h530M236 309.500h530M236 330h530M236 351h530M236 372h530M236 393h530"/></svg>
<div class="zone"></div><div class="tag">Input</div>
<svg class="over" width="530" height="164" viewBox="236 242 530 164" fill="none" stroke="#3c3a38" stroke-width="1.100">
<path fill="#f6f6f6" stroke="#555" stroke-width=".7" d="M334 257l2 2 2-2"/>
<path d="M292 268h91M405 268h11M438 268h92M592 268h25M351 294h32M405 294h10M437 294h10M351 314h32M405 314h10M437 314h10"/>
<path d="M438 268C535 268 560 299 657 299M638 268c18 0 0 31 19 31M504 294c14 0 12-18 26-18"/>
<path stroke="#78b03c" d="M678 299h20"/><path stroke="url(#gw)" d="M504 314C570 314 620 307 698 307"/>
<defs><linearGradient id="gw"><stop stop-color="#a3a49a"/><stop offset=".5" stop-color="#78b03c"/></linearGradient></defs>
<g fill="#fff" stroke="#222" stroke-width=".9"><circle cx="270.500" cy="268" r="1.300"/><circle cx="292.500" cy="268" r="1.300"/><circle cx="382.500" cy="268" r="1.300"/><circle cx="405.500" cy="268" r="1.300"/><circle cx="415.500" cy="268" r="1.300"/><circle cx="438.500" cy="268" r="1.300"/><circle cx="529.500" cy="268" r="1.300"/><circle cx="529.500" cy="276" r="1.300"/><circle cx="592.500" cy="268" r="1.300"/><circle cx="592.500" cy="276" r="1.300"/><circle cx="616.500" cy="268" r="1.300"/><circle cx="639.500" cy="268" r="1.300"/><circle cx="656.500" cy="299" r="1.300"/><circle cx="679.500" cy="299" r="1.300"/><circle cx="697.500" cy="299" r="1.300"/><circle cx="697.500" cy="307" r="1.300"/><circle cx="760.500" cy="299" r="1.300"/><circle cx="760.500" cy="307" r="1.300"/><circle cx="352.500" cy="294" r="1.300"/><circle cx="382.500" cy="294" r="1.300"/><circle cx="405.500" cy="294" r="1.300"/><circle cx="414.500" cy="294" r="1.300"/><circle cx="437.500" cy="294" r="1.300"/><circle cx="446.500" cy="294" r="1.300"/><circle cx="504.500" cy="294" r="1.300"/><circle cx="352.500" cy="314" r="1.300"/><circle cx="382.500" cy="314" r="1.300"/><circle cx="405.500" cy="314" r="1.300"/><circle cx="414.500" cy="314" r="1.300"/><circle cx="437.500" cy="314" r="1.300"/><circle cx="446.500" cy="314" r="1.300"/><circle cx="504.500" cy="314" r="1.300"/></g>
</svg>
<div class="nd sm" id="a1"></div>
<div class="nd sm d-flex align-items-center justify-content-center" id="a2"><svg class="i9"><use href="#hx"/></svg></div>
<div class="nd sm lt d-flex align-items-center justify-content-center" id="a3"><svg class="i9"><use href="#hx"/></svg></div>
<div class="nd big d-flex justify-content-between align-items-center" id="a4"><span class="text-end">Geometry<br>Motion</span><svg class="i9"><use href="#gear"/></svg><span class="text-end">Geometry<br>Transform</span></div>
<div class="nd sm lt d-flex align-items-center justify-content-center" id="a5"><svg class="i9"><use href="#hx"/></svg></div>
<div class="nd sm lt d-flex align-items-center justify-content-center" id="a6"><svg class="i9"><use href="#hx"/></svg></div>
<div class="nd big gn d-flex justify-content-between align-items-center" id="a7"><span class="text-end">Geometry<br>Motion</span><svg class="i9"><use href="#gear"/></svg><span class="text-end">Geometry<br>Transform</span></div>
<div class="nd sl d-flex" id="b1"><label class="text-center" for="rw">Width</label><div class="trk flex-grow-1 position-relative"><input type="range" id="rw" min="1000" max="9000" value="1000"><output for="rw">1000</output></div></div>
<div class="nd sm d-flex align-items-center justify-content-center" id="b2"><svg class="i9"><use href="#hq"/></svg></div>
<div class="nd sm d-flex align-items-center justify-content-center" id="b3"><svg class="i9"><use href="#hq"/></svg></div>
<div class="nd fac d-flex justify-content-between align-items-center" id="b4"><span>Factor</span><svg class="i9"><use href="#vx"/></svg><span>Unit vector</span></div>
<div class="nd sl d-flex" id="c1"><label class="text-center" for="rl">Length</label><div class="trk flex-grow-1 position-relative"><input type="range" id="rl" min="1000" max="9000" value="1000"><output for="rl">1000</output></div></div>
<div class="nd sm d-flex align-items-center justify-content-center" id="c2"><svg class="i9"><use href="#hq"/></svg></div>
<div class="nd sm d-flex align-items-center justify-content-center" id="c3"><svg class="i9"><use href="#hq"/></svg></div>
<div class="nd fac d-flex justify-content-between align-items-center" id="c4"><span>Factor</span><svg class="i9"><use href="#vy"/></svg><span>Unit vector</span></div>
<div class="shelf d-flex align-items-center justify-content-around"><svg class="i9"><use href="#vz"/></svg><svg class="i9"><use href="#vx"/></svg><svg class="i9"><use href="#plusc"/></svg><svg class="i9"><use href="#fork"/></svg><svg class="i9"><use href="#gear"/></svg></div>
<svg class="over pe-none" width="530" height="164" viewBox="236 242 530 164"><svg x="699" y="321" width="6" height="9"><use href="#curs"/></svg></svg>
<svg class="dial" viewBox="0 0 26 24"><path fill="#222" d="M0 7l5 1 3-4 4-2-1 3-4 3-1 4z"/><circle cx="14" cy="13" r="9" fill="#e6e6e6" stroke="#8a8a86"/><circle cx="14" cy="13" r="6" fill="#d2d2d2"/><g fill="#fff"><circle cx="14" cy="6" r="1"/><circle cx="14" cy="20" r="1"/><circle cx="7" cy="13" r="1"/><circle cx="21" cy="13" r="1"/></g></svg>
</div>
<div class="st d-flex align-items-center"><svg class="i9" viewBox="0 0 12 12"><circle cx="6" cy="6" r="5" fill="#2e7cc4"/><circle cx="6" cy="6" r="2" fill="#8cc3f2"/></svg><span>Autosave complete (1 seconds ago)</span><span class="ver ms-auto pe-1">1.0.0007</span><svg class="i7" viewBox="0 0 7 7"><path fill="#999" d="M5 1h1v1H5zM3 3h1v1H3zM5 3h1v1H5zM1 5h1v1H1zM3 5h1v1H3zM5 5h1v1H5z"/></svg></div>
</div>
</div>
<div class="mtabs d-flex align-items-center flex-shrink-0"><button class="nb" aria-label="First"><svg width="6" height="7" viewBox="0 0 6 7"><path fill="#ddd" d="M1 1.500h1v4H1zM5 1.500v4l-3-2z"/></svg></button><button class="nb" aria-label="Previous"><svg width="6" height="7" viewBox="0 0 6 7"><path fill="#ddd" d="M4 1.500v4l-3-2z"/></svg></button><button class="nb" aria-label="Next"><svg width="6" height="7" viewBox="0 0 6 7"><path fill="#ddd" d="M2 1.500v4l3-2z"/></svg></button><button class="nb" aria-label="Last"><svg width="6" height="7" viewBox="0 0 6 7"><path fill="#ddd" d="M4 1.500h1v4H4zM1 1.500v4l3-2z"/></svg></button><button class="nb" aria-label="List"><svg width="6" height="7" viewBox="0 0 6 7"><path stroke="#aaa" stroke-width=".8" d="M1 2h4M1 3.500h4M1 5h4"/></svg></button><a class="lk on" href="#">Model</a><a class="lk ms-1" href="#">Layout1</a><a class="lk ms-1" href="#">Layout2</a><button class="ms-1">+</button></div>
</div>

<aside class="side d-flex flex-column align-items-center"><div class="hnd d-flex justify-content-center align-items-center"><svg width="6" height="2"><use href="#dots"/></svg></div>
<div class="rail d-flex flex-column" id="rr">
<button aria-label="Properties"><svg viewBox="0 0 10 10"><path d="M0 2h10M0 5h10M0 8h10M2 1h2v2H2zM7 4h2v2H7zM4 7h2v2H4z"/></svg></button>
<button aria-label="Tips"><svg viewBox="0 0 10 10"><path d="M3.500 7L1.500 4a3.500 3.500 0 117 0l-2 3zM3.500 9h3M5 1v6M3.500 1.500v5M6.500 1.500v5"/></svg></button>
<button aria-label="Render"><svg viewBox="0 0 10 10"><circle cx="5" cy="5" r="5"/><path d="M6 1.500a4 4 0 010 7M4 3a2 2 0 010 4"/><circle cx="4" cy="5" r="1"/></svg></button>
<button aria-label="Compositions"><svg viewBox="0 0 10 10"><path d="M0 1h10v8H0zM0 3h10M0 4.500h10M0 7h10M1 3l2 1M4 3l2 1M7 3l2 1"/></svg></button>
<button aria-label="Profiles"><svg viewBox="0 0 10 10"><path d="M0 0h10v2H6v6h4v2H0V8h4V2H0z"/></svg></button>
<button aria-label="Layers"><svg viewBox="0 0 10 10"><path d="M5 0l5 3-5 3-5-3zM0 5l5 3 5-3M0 7l5 3 5-3"/></svg></button>
<button aria-label="Blocks"><svg viewBox="0 0 10 10"><path d="M5 0l4.500 2.500v5L5 10 .5 7.500v-5zM.5 2.500L5 5l4.500-2.500M5 5v5"/></svg></button>
<button aria-label="Sheets"><svg viewBox="0 0 10 10"><path d="M1 0h8v5H1zM3 2v3M5 2v3M7 2v3M5 5v5M3 8l2 2 2-2"/></svg></button>
<button aria-label="Folders"><svg viewBox="0 0 10 10"><path d="M0 9V1h4l1 2h5v6zM0 9l2-4h8"/></svg></button>
<button aria-label="Hatch"><svg viewBox="0 0 10 10"><path d="M0 0h10v10H0zM0 3l7 7M0 6l4 4M3 0l7 7M6 0l4 4M0 0l10 10M3 3v7M0 5h10"/></svg></button>
<button aria-label="Components"><svg viewBox="0 0 10 10"><path d="M0 0h4v4H0zM6 0h4v4H6zM0 6h4v4H0zM6 6h4v4H6z"/></svg></button>
<button aria-label="Attachments"><svg viewBox="0 0 10 10"><path d="M3 3v5a2 2 0 004 0V2a1.500 1.500 0 00-3 0v5.500a.8.8 0 001.600 0V3"/></svg></button>
<button aria-label="Cloud"><svg viewBox="0 0 10 10"><path d="M3 8H2a2 2 0 010-4 3 3 0 016 0 2 2 0 010 4H7M5 9V5M3.500 6.500L5 5l1.500 1.500"/></svg></button>
</div></aside>
</main>

<footer class="status d-flex align-items-center flex-shrink-0"><svg class="i7" viewBox="0 0 7 7"><path fill="#777" d="M1 1h1v1H1zM3 1h1v1H3zM1 3h1v1H1zM3 3h1v1H3z"/></svg>
<span class="c ms-auto coords text-end">-13706.01, -3956.23, 0</span><span class="c">Standard</span><span class="c">ISO-25</span><span class="c">BIM</span><span class="c t off">SNAP</span><span class="c t off">GRID</span><span class="c t off">ORTHO</span><span class="c t off">POLAR</span><span class="c t off">ESNAP</span><span class="c t lit">STRACK</span><span class="c t off">LWT</span><span class="c t">TILE</span><span class="c t">1:1</span><span class="c t lit">DUCS</span><span class="c t lit">DYN</span><span class="c t lit">QUAD</span><span class="c t lit">RT</span><span class="c t lit">HKA</span><span class="c t off">LOCKUI</span><span class="c">None</span><button class="c more text-start">▾</button></footer>
</body>
</html>
